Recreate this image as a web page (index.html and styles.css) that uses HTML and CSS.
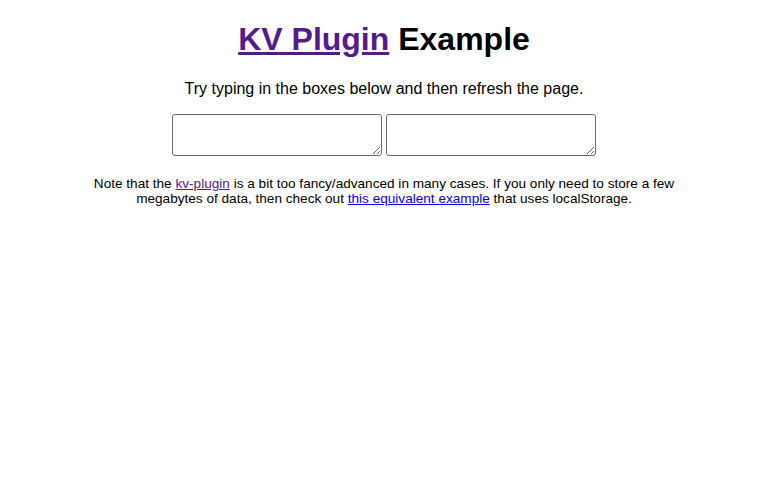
FILE: index.html
```html
<!DOCTYPE html>
<html lang="en">
<head>
    <meta charset="UTF-8">
    <meta name="viewport" content="width=device-width, initial-scale=1.0">
    <title>KV Plugin Example</title>
    <link rel="stylesheet" href="styles.css">
</head>
<body>
    <div class="page">
        <h1><a href="#" class="visited">KV Plugin</a> Example</h1>
        <p class="intro">Try typing in the boxes below and then refresh the page.</p>
        <div class="boxes">
            <textarea class="box"></textarea>
            <textarea class="box"></textarea>
        </div>
        <p class="note">Note that the <a href="#" class="visited">kv-plugin</a> is a bit too fancy/advanced in many cases. If you only need to store a few megabytes of data, then check out <a href="#" class="link">this equivalent example</a> that uses localStorage.</p>
    </div>
</body>
</html>
```

FILE: styles.css
```css
body {
    margin: 0;
    font-family: "Liberation Sans", Arial, sans-serif;
    background: #fff;
    color: #000;
}
.page {
    max-width: 600px;
    margin: 0 auto;
    padding-top: 21px;
    text-align: center;
}
h1 {
    font-size: 32px;
    font-weight: bold;
    line-height: 37px;
    margin: 0 0 22px;
}
a.visited {
    color: #551a8b;
}
a.link {
    color: #0000ee;
}
.intro {
    font-size: 16px;
    line-height: 18px;
    margin: 0 0 16px;
}
.boxes {
    display: flex;
    justify-content: center;
    gap: 4px;
}
.box {
    box-sizing: border-box;
    width: 210px;
    height: 42px;
    margin: 0;
    border: 1px solid #6b6b6b;
    border-radius: 3px;
    font-family: "Liberation Mono", monospace;
    font-size: 13px;
}
.note {
    font-size: 13.6px;
    line-height: 15px;
    margin: 20px 0 0;
}
```
